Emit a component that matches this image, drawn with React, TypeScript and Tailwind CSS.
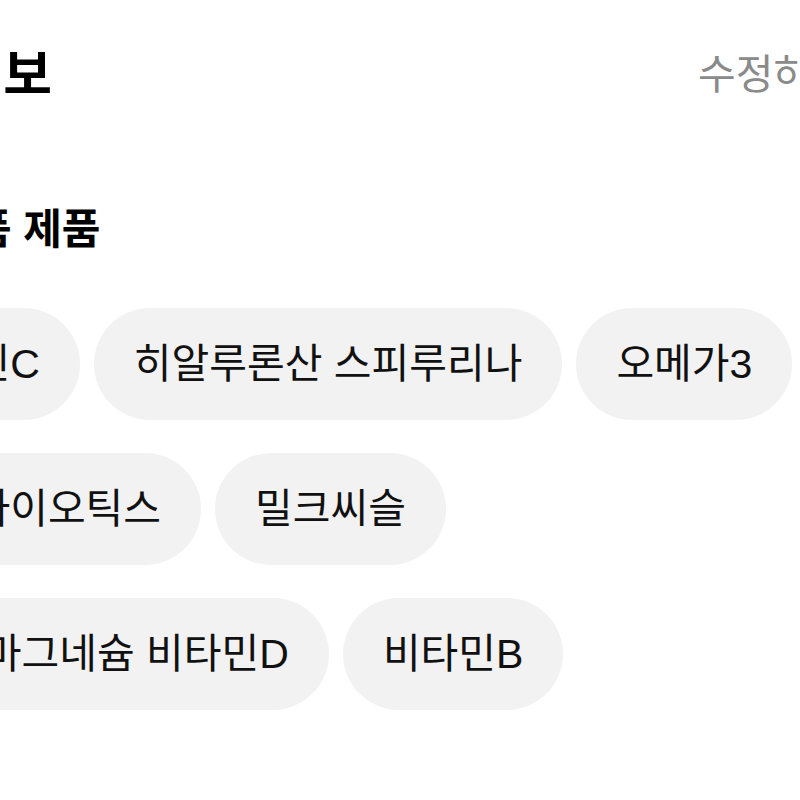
import React from "react";

const ROWS = [
  ["비타민C", "히알루론산 스피루리나", "오메가3"],
  ["프로바이오틱스", "밀크씨슬"],
  ["칼슘 마그네슘 비타민D", "비타민B"],
];

function Chip({ label }: { label: string }) {
  return (
    <span className="flex h-[112px] items-center rounded-full bg-[#f2f2f2] px-[40px] text-[41px] leading-none text-[#111111] whitespace-nowrap">
      {label}
    </span>
  );
}

export default function App() {
  const products = ROWS.flat();
  return (
    <div className="h-[800px] w-[800px] overflow-hidden bg-white font-['Liberation_Sans','Noto_Sans_CJK_KR',sans-serif]">
      <div className="ml-[-143px] w-[992px]">
        {/* Header row */}
        <div className="mt-[45px] flex h-[60px] items-center justify-between">
          <h1 className="text-[53px] font-bold leading-none text-black">건강정보</h1>
          <button className="text-[41px] leading-none text-[#8a8a8a]">수정하기</button>
        </div>

        {/* Products section */}
        <div className="mt-[100px] flex h-[50px] items-center">
          <h2 className="text-[42px] font-bold leading-none text-black">건강식품 제품</h2>
        </div>

        <div className="mt-[53px] flex flex-wrap gap-x-[14px] gap-y-[33px]">
          {products.map((p) => (
            <Chip key={p} label={p} />
          ))}
        </div>
      </div>
    </div>
  );
}
